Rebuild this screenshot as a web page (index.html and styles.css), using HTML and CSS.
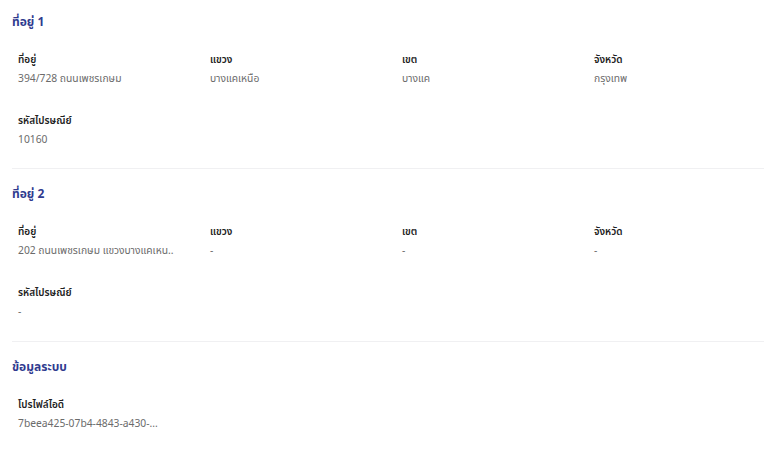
FILE: index.html
```html
<!DOCTYPE html>
<html lang="th">
<head>
<meta charset="utf-8">
<link rel="stylesheet" href="styles.css">
</head>
<body>
<div class="page">
  <section class="section">
    <h2 class="title">ที่อยู่ 1</h2>
    <div class="grid">
      <div class="field"><div class="label">ที่อยู่</div><div class="value">394/728 ถนนเพชรเกษม</div></div>
      <div class="field"><div class="label">แขวง</div><div class="value">บางแคเหนือ</div></div>
      <div class="field"><div class="label">เขต</div><div class="value">บางแค</div></div>
      <div class="field"><div class="label">จังหวัด</div><div class="value">กรุงเทพ</div></div>
      <div class="field"><div class="label">รหัสไปรษณีย์</div><div class="value">10160</div></div>
    </div>
  </section>
  <section class="section">
    <h2 class="title">ที่อยู่ 2</h2>
    <div class="grid">
      <div class="field"><div class="label">ที่อยู่</div><div class="value">202 ถนนเพชรเกษม แขวงบางแคเหน..</div></div>
      <div class="field"><div class="label">แขวง</div><div class="value">-</div></div>
      <div class="field"><div class="label">เขต</div><div class="value">-</div></div>
      <div class="field"><div class="label">จังหวัด</div><div class="value">-</div></div>
      <div class="field"><div class="label">รหัสไปรษณีย์</div><div class="value">-</div></div>
    </div>
  </section>
  <section class="section last">
    <h2 class="title">ข้อมูลระบบ</h2>
    <div class="grid">
      <div class="field"><div class="label">โปรไฟล์ไอดี</div><div class="value">7beea425-07b4-4843-a430-...</div></div>
    </div>
  </section>
</div>
</body>
</html>
```
FILE: styles.css
```css
html, body {
  margin: 0;
  padding: 0;
  background: #ffffff;
}
body {
  font-family: "Noto Sans Thai", "Noto Sans", "DejaVu Sans", sans-serif;
  color: #222;
}
.page {
  padding: 13px 4px 0 12px;
}
.section {
  border-bottom: 1px solid #f0f0f2;
  padding-bottom: 21px;
  margin-bottom: 16px;
}
.section:first-child {
  padding-bottom: 20px;
}
.section.last {
  border-bottom: none;
}
.title {
  margin: 0;
  font-size: 12px;
  line-height: 18px;
  font-weight: 700;
  color: #303b8f;
}
.grid {
  display: grid;
  grid-template-columns: repeat(4, 1fr);
  column-gap: 28px;
  row-gap: 26px;
  padding: 21px 6px 0 6px;
}
.field {
  display: flex;
  flex-direction: column;
  gap: 3px;
}
.label {
  font-size: 10px;
  line-height: 16px;
  font-weight: 600;
  color: #222;
}
.value {
  font-size: 10.3px;
  line-height: 16px;
  color: #6b6b6b;
  white-space: nowrap;
}
```
